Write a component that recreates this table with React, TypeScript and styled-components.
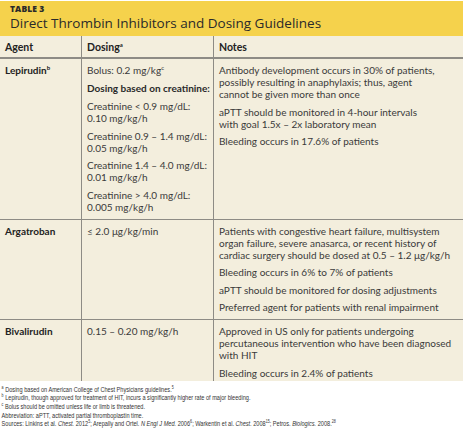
import React from "react";
import styled, { createGlobalStyle } from "styled-components";

const GlobalStyle = createGlobalStyle`
  html, body {
    margin: 0;
    padding: 0;
    background: #ffffff;
  }
  body {
    font-family: Lato, "Open Sans", sans-serif;
    color: #333333;
  }
`;

const Page = styled.div`
  width: 468px;
  height: 432px;
  overflow: hidden;
  padding-top: 1px;
  box-sizing: border-box;
`;

const Band = styled.div`
  width: 463px;
  height: 35px;
  background: #f5d24c;
  padding: 3px 0 0 10px;
  box-sizing: border-box;
`;

const Label = styled.div`
  font-family: "Open Sans", sans-serif;
  font-size: 8.5px;
  font-weight: 800;
  letter-spacing: 0.1px;
  line-height: 10px;
  color: #2a2a2a;
`;

const Title = styled.div`
  font-family: "Open Sans", sans-serif;
  font-size: 13.5px;
  line-height: 18px;
  color: #2a2a2a;
`;

const Table = styled.div`
  width: 463px;
  background: #f3eedd;
  display: grid;
  grid-template-columns: 81px 132px 250px;
`;

const Cell = styled.div<{ $head?: boolean; $last?: boolean; $first?: boolean }>`
  padding: ${(p) =>
    p.$head ? "5px 4px 4px 5px" : p.$last ? "5px 4px 2px 5px" : "5px 4px 6px 5px"};
  border-left: ${(p) => (p.$first ? "none" : "1px solid #8d8b85")};
  border-bottom: ${(p) =>
    p.$head ? "2px solid #8d8b85" : p.$last ? "none" : "1px solid #8d8b85"};
  font-size: ${(p) => (p.$head ? "10.5px" : "10px")};
  line-height: 12px;
  font-weight: ${(p) => (p.$head ? 700 : 400)};
  color: ${(p) => (p.$head ? "#222" : "#3a3a3a")};
  white-space: nowrap;
  display: flex;
  flex-direction: column;
  gap: 5.5px;
`;

const Agent = styled.span`
  font-weight: 700;
  color: #222;
`;

const Sup = styled.sup`
  font-size: 6px;
  line-height: 0;
  vertical-align: 4px;
`;

const Strong = styled.div`
  font-weight: 700;
  color: #2a2a2a;
  margin-bottom: 1px;
`;

const Notes = styled.div`
  padding: 5px 0 0 2px;
  font-family: "Liberation Sans", Arial, sans-serif;
  font-size: 7px;
  line-height: 8.7px;
  color: #333;
  white-space: nowrap;
  transform: scaleX(0.8);
  transform-origin: left top;
`;

const NoteSup = styled.sup`
  font-size: 4.5px;
  line-height: 0;
  vertical-align: 3px;
`;

const dosing = [
  ["Creatinine < 0.9 mg/dL:", "0.10 mg/kg/h"],
  ["Creatinine 0.9 – 1.4 mg/dL:", "0.05 mg/kg/h"],
  ["Creatinine 1.4 – 4.0 mg/dL:", "0.01 mg/kg/h"],
  ["Creatinine > 4.0 mg/dL:", "0.005 mg/kg/h"],
];

export default function App() {
  return (
    <Page>
      <GlobalStyle />
      <Band>
        <Label>TABLE 3</Label>
        <Title>Direct Thrombin Inhibitors and Dosing Guidelines</Title>
      </Band>
      <Table>
        <Cell $head $first>Agent</Cell>
        <Cell $head>
          <span>
            Dosing<Sup>a</Sup>
          </span>
        </Cell>
        <Cell $head>Notes</Cell>

        <Cell $first>
          <Agent>
            Lepirudin<Sup>b</Sup>
          </Agent>
        </Cell>
        <Cell>
          <div>
            Bolus: 0.2 mg/kg<Sup>c</Sup>
          </div>
          <Strong>Dosing based on creatinine:</Strong>
          {dosing.map(([a, b]) => (
            <div key={a}>
              {a}
              <br />
              {b}
            </div>
          ))}
        </Cell>
        <Cell>
          <div>
            Antibody development occurs in 30% of patients,
            <br />
            possibly resulting in anaphylaxis; thus, agent
            <br />
            cannot be given more than once
          </div>
          <div>
            aPTT should be monitored in 4-hour intervals
            <br />
            with goal 1.5x – 2x laboratory mean
          </div>
          <div>Bleeding occurs in 17.6% of patients</div>
        </Cell>

        <Cell $first>
          <Agent>Argatroban</Agent>
        </Cell>
        <Cell>
          <div>≤ 2.0 μg/kg/min</div>
        </Cell>
        <Cell>
          <div>
            Patients with congestive heart failure, multisystem
            <br />
            organ failure, severe anasarca, or recent history of
            <br />
            cardiac surgery should be dosed at 0.5 – 1.2 μg/kg/h
          </div>
          <div>Bleeding occurs in 6% to 7% of patients</div>
          <div>aPTT should be monitored for dosing adjustments</div>
          <div>Preferred agent for patients with renal impairment</div>
        </Cell>

        <Cell $first $last>
          <Agent>Bivalirudin</Agent>
        </Cell>
        <Cell $last>
          <div>0.15 – 0.20 mg/kg/h</div>
        </Cell>
        <Cell $last>
          <div>
            Approved in US only for patients undergoing
            <br />
            percutaneous intervention who have been diagnosed
            <br />
            with HIT
          </div>
          <div>Bleeding occurs in 2.4% of patients</div>
        </Cell>
      </Table>
      <Notes>
        <div>
          <NoteSup>a</NoteSup> Dosing based on American College of Chest Physicians guidelines.<NoteSup>5</NoteSup>
        </div>
        <div>
          <NoteSup>b</NoteSup> Lepirudin, though approved for treatment of HIT, incurs a significantly higher rate of major bleeding.
        </div>
        <div>
          <NoteSup>c</NoteSup> Bolus should be omitted unless life or limb is threatened.
        </div>
        <div>Abbreviation: aPTT, activated partial thromboplastin time.</div>
        <div>
          Sources: Linkins et al. <i>Chest.</i> 2012<NoteSup>5</NoteSup>; Arepally and Ortel. <i>N Engl J Med.</i> 2006<NoteSup>6</NoteSup>; Warkentin et al. <i>Chest.</i> 2008<NoteSup>15</NoteSup>; Petros. <i>Biologics.</i> 2008.<NoteSup>28</NoteSup>
        </div>
      </Notes>
    </Page>
  );
}
